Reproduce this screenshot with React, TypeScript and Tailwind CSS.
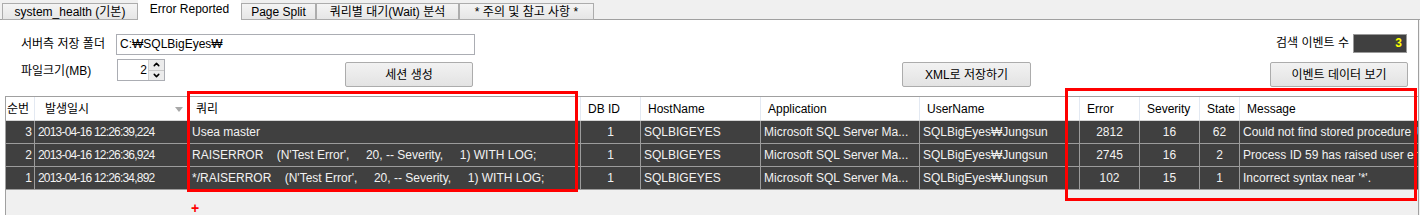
import { ChevronDown, ChevronUp } from "lucide-react";

type Col = {
  key: string;
  title: string;
  width: number;
  align: "left" | "center" | "right";
};

const cols: Col[] = [
  { key: "no", title: "순번", width: 29, align: "right" },
  { key: "time", title: "발생일시", width: 154, align: "left" },
  { key: "query", title: "쿼리", width: 392, align: "left" },
  { key: "db", title: "DB ID", width: 60, align: "center" },
  { key: "host", title: "HostName", width: 120, align: "left" },
  { key: "app", title: "Application", width: 159, align: "left" },
  { key: "user", title: "UserName", width: 160, align: "left" },
  { key: "error", title: "Error", width: 60, align: "center" },
  { key: "sev", title: "Severity", width: 60, align: "center" },
  { key: "state", title: "State", width: 40, align: "center" },
  { key: "msg", title: "Message", width: 179, align: "left" },
];

const rows: Record<string, string>[] = [
  {
    no: "3",
    time: "2013-04-16 12:26:39,224",
    query: "Usea master",
    db: "1",
    host: "SQLBIGEYES",
    app: "Microsoft SQL Server Ma...",
    user: "SQLBigEyes₩Jungsun",
    error: "2812",
    sev: "16",
    state: "62",
    msg: "Could not find stored procedure 'Usea'.",
  },
  {
    no: "2",
    time: "2013-04-16 12:26:36,924",
    query: "RAISERROR    (N'Test Error',     20, -- Severity,     1) WITH LOG;",
    db: "1",
    host: "SQLBIGEYES",
    app: "Microsoft SQL Server Ma...",
    user: "SQLBigEyes₩Jungsun",
    error: "2745",
    sev: "16",
    state: "2",
    msg: "Process ID 59 has raised user error 50000",
  },
  {
    no: "1",
    time: "2013-04-16 12:26:34,892",
    query: "*/RAISERROR    (N'Test Error',     20, -- Severity,     1) WITH LOG;",
    db: "1",
    host: "SQLBIGEYES",
    app: "Microsoft SQL Server Ma...",
    user: "SQLBigEyes₩Jungsun",
    error: "102",
    sev: "15",
    state: "1",
    msg: "Incorrect syntax near '*'.",
  },
];

const tabs = [
  { label: "system_health (기본)", width: 136, active: false },
  { label: "Error Reported", width: 103, active: true },
  { label: "Page Split", width: 75, active: false },
  { label: "쿼리별 대기(Wait) 분석", width: 143, active: false },
  { label: "* 주의 및 참고 사항 *", width: 135, active: false },
];

const alignCls = {
  left: "justify-start",
  center: "justify-center",
  right: "justify-end",
};

const WinButton = ({ label, width }: { label: string; width: number }) => (
  <button
    className="h-[25px] border border-[#acacac] rounded-[2px] bg-gradient-to-b from-[#f2f2f2] to-[#e3e3e3] text-[12px] text-black flex items-center justify-center"
    style={{ width }}
  >
    {label}
  </button>
);

export default function App() {
  return (
    <div className="relative w-[1420px] h-[215px] overflow-hidden bg-[#f0f0f0] font-['Liberation_Sans','Noto_Sans_CJK_KR',sans-serif] text-[12px] text-black leading-none">
      {/* tab strip */}
      <div className="h-[20px] flex items-end pl-[2px] border-b border-[#a0a0a0]">
        {tabs.map((t) =>
          t.active ? (
            <div
              key={t.label}
              className="h-[21px] -mb-px bg-white flex items-center justify-center pb-[2px]"
              style={{ width: t.width }}
            >
              {t.label}
            </div>
          ) : (
            <div
              key={t.label}
              className="h-[17px] -mb-px border border-[#acacac] bg-gradient-to-b from-[#f4f4f4] to-[#e6e6e6] flex items-center justify-center"
              style={{ width: t.width }}
            >
              {t.label}
            </div>
          )
        )}
      </div>

      {/* panel */}
      <div className="w-[1419px] h-[195px] bg-white border-r border-[#a0a0a0] flex flex-col">
        <div className="h-[76px] pt-[13px] flex flex-col">
          <div className="flex items-center h-[22px]">
            <span className="w-[96px] pl-[21px] shrink-0 whitespace-nowrap">
              서버측 저장 폴더
            </span>
            <div className="w-[359px] h-[21px] ml-[20px] border border-[#abadb3] flex items-center pl-[3px]">
              C:₩SQLBigEyes₩
            </div>
            <div className="flex-1" />
            <span className="mr-[4px] -mt-[2px]">검색 이벤트 수</span>
            <div className="w-[54px] h-[19px] -mt-[2px] bg-[#404040] border border-[#9a9a9a] flex items-center justify-end pr-[4px] text-[#ffff00] font-bold">
              3
            </div>
            <div className="w-[11px]" />
          </div>
          <div className="flex items-start mt-[4px]">
            <span className="w-[117px] pl-[21px] mt-[6px] shrink-0 whitespace-nowrap">
              파일크기(MB)
            </span>
            <div className="w-[48px] h-[22px] border border-[#abadb3] flex items-stretch">
              <div className="flex-1 flex items-center justify-end pr-[1px]">
                2
              </div>
              <div className="w-[16px] flex flex-col border-l border-[#d0d0d0]">
                <div className="flex-1 flex items-center justify-center bg-[#ececec] border-b border-[#c8c8c8]">
                  <ChevronUp size={9} strokeWidth={4} />
                </div>
                <div className="flex-1 flex items-center justify-center bg-[#ececec]">
                  <ChevronDown size={9} strokeWidth={4} />
                </div>
              </div>
            </div>
            <div className="w-[180px]" />
            <div className="mt-[3px]">
              <WinButton label="세션 생성" width={128} />
            </div>
            <div className="w-[429px]" />
            <div className="mt-[3px]">
              <WinButton label="XML로 저장하기" width={129} />
            </div>
            <div className="w-[239px]" />
            <div className="mt-[3px]">
              <WinButton label="이벤트 데이터 보기" width={138} />
            </div>
          </div>
        </div>

        {/* grid */}
        <div className="flex-1 ml-[5px] bg-[#f0f0f0] border-l border-t border-[#a0a0a0] overflow-hidden">
          <div className="flex h-[24px] bg-white border-b border-[#d5d5d5]">
            {cols.map((c, i) => (
              <div
                key={c.key}
                className={`relative shrink-0 h-full flex items-center whitespace-nowrap border-r border-[#e3e9f2] ${
                  i === 0 ? "pl-[1px]" : i === 1 ? "pl-[10px]" : "pl-[7px]"
                }`}
                style={{ width: c.width }}
              >
                {c.title}
                {c.key === "time" && (
                  <svg
                    className="absolute right-[5px] top-[10px]"
                    width="8"
                    height="5"
                    viewBox="0 0 8 5"
                  >
                    <path d="M0 0 L8 0 L4 5 Z" fill="#a8a8a8" />
                  </svg>
                )}
              </div>
            ))}
          </div>
          {rows.map((r, ri) => (
            <div key={ri} className="flex h-[23px] bg-[#404040]">
              {cols.map((c) => (
                <div
                  key={c.key}
                  className={`shrink-0 h-full flex items-center whitespace-pre overflow-hidden border-r border-b border-[#9c9c9c] text-[#f2f2f2] ${
                    alignCls[c.align]
                  } ${c.align === "right" ? "pr-[2px]" : c.align === "left" ? "pl-[3px]" : ""} ${
                    c.key === "time" ? "tracking-[-0.8px]" : ""
                  }`}
                  style={{ width: c.width }}
                >
                  {r[c.key]}
                </div>
              ))}
            </div>
          ))}
        </div>
      </div>

      {/* annotations */}
      <div className="absolute left-[187px] top-[91px] w-[391px] h-[101px] border-[3px] border-[#ff0000]" />
      <div className="absolute left-[1065px] top-[88px] w-[352px] h-[113px] border-[3px] border-[#ff0000]" />
      <div className="absolute left-[191px] top-[202px] text-[#ff0000] text-[14px] font-bold leading-[12px]">
        +
      </div>
    </div>
  );
}
